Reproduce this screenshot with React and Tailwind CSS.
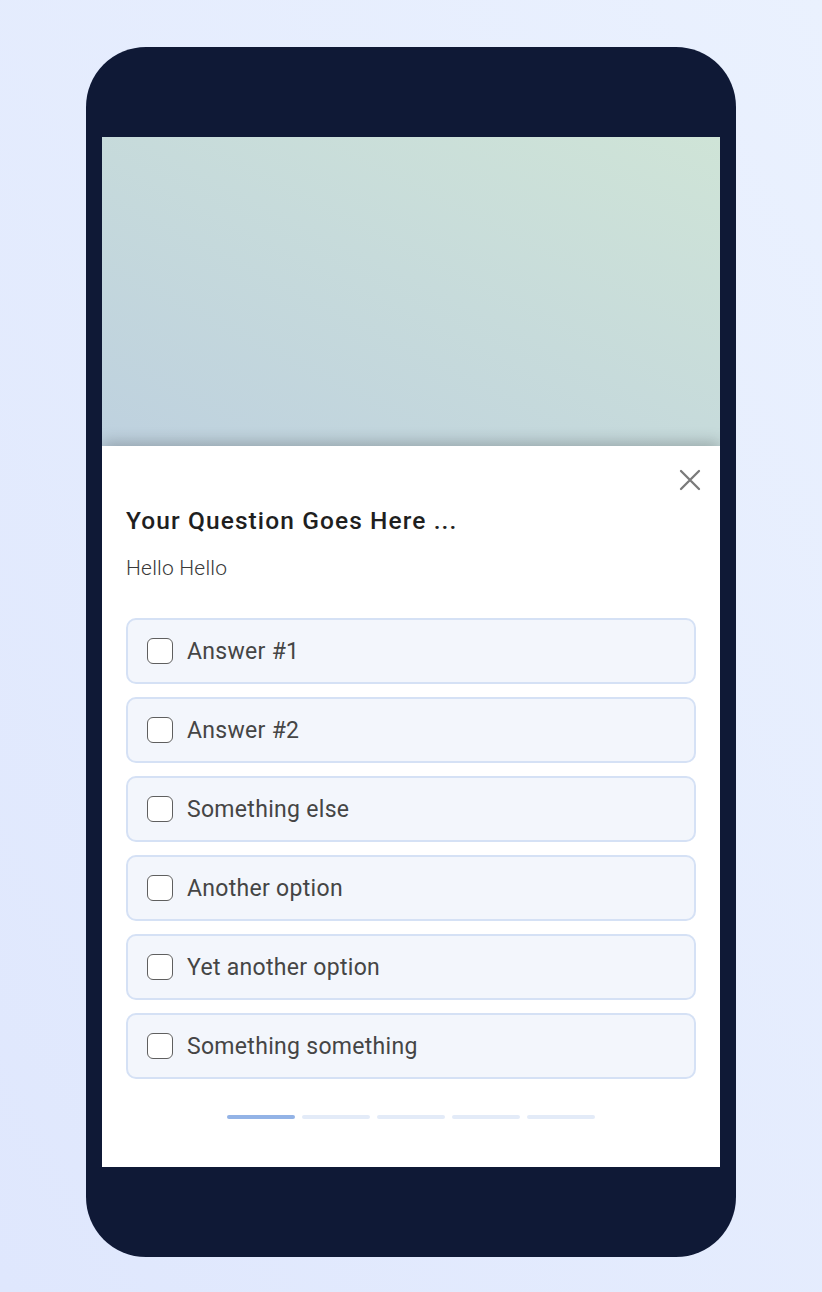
import React from "react";

const options = [
  "Answer #1",
  "Answer #2",
  "Something else",
  "Another option",
  "Yet another option",
  "Something something",
];

function CloseIcon() {
  return (
    <svg width="22" height="22" viewBox="0 0 22 22" fill="none">
      <path d="M2 2L20 20M20 2L2 20" stroke="#7a7a7a" strokeWidth="2.3" strokeLinecap="round" />
    </svg>
  );
}

export default function App() {
  return (
    <div
      className="min-h-[1292px] w-full bg-gradient-to-tr from-[#dfe7fd] to-[#eaf1fe] pt-[47px] flex justify-center"
      style={{ fontFamily: "Roboto, 'Noto Sans', sans-serif" }}
    >
      <div className="w-[650px] h-[1210px] rounded-[60px] bg-[#0f1936] px-[16px] py-[90px]">
        <div className="h-full flex flex-col bg-white overflow-hidden">
          {/* hero image */}
          <div className="h-[309px] shrink-0 bg-gradient-to-tr from-[#bed1df] to-[#cfe4d7]" />
          {/* question card */}
          <div className="relative flex-1 flex flex-col bg-white shadow-[0_-4px_14px_rgba(0,0,0,0.22)] pt-[22px] px-[24px]">
            <div className="flex justify-end h-[24px]">
              <button className="w-[24px] h-[24px] flex items-center justify-center mr-[-6px]">
                <CloseIcon />
              </button>
            </div>
            <h1 className="mt-[14px] text-[24.5px] leading-[30px] font-medium text-[#1f1f1f] tracking-[1.1px]">
              Your Question Goes Here ...
            </h1>
            <p className="mt-[18px] text-[21px] leading-[28px] font-light text-[#3a3a3a] tracking-[0.2px]">Hello Hello</p>
            <div className="mt-[36px] flex flex-col gap-[13px]">
              {options.map((o) => (
                <label
                  key={o}
                  className="h-[66px] flex items-center gap-[14px] pl-[19px] rounded-[10px] border-2 border-[#d5e1f5] bg-[#f3f6fc]"
                >
                  <span className="w-[26px] h-[26px] rounded-[6px] border-[1.5px] border-[#5f5f5f] bg-white shrink-0" />
                  <span className="text-[23px] tracking-[0.3px] text-[#454545] pt-[3px]">{o}</span>
                </label>
              ))}
            </div>
            <div className="mt-[36px] flex justify-center gap-[7px]">
              <div className="w-[68px] h-[4px] rounded-full bg-[#93b3e6]" />
              <div className="w-[68px] h-[4px] rounded-full bg-[#e3ebf8]" />
              <div className="w-[68px] h-[4px] rounded-full bg-[#e3ebf8]" />
              <div className="w-[68px] h-[4px] rounded-full bg-[#e3ebf8]" />
              <div className="w-[68px] h-[4px] rounded-full bg-[#e3ebf8]" />
            </div>
          </div>
        </div>
      </div>
    </div>
  );
}
